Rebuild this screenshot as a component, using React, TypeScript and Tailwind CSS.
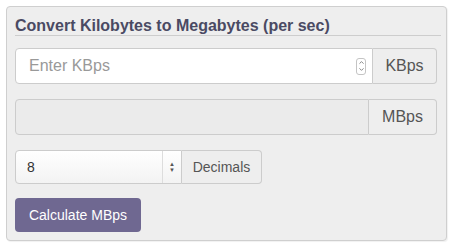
import { ChevronUp, ChevronDown } from "lucide-react"

export default function App() {
  return (
    <div className="h-[249px] w-[453px] bg-white p-[6px] font-['Liberation_Sans',Arial,sans-serif]">
      <div className="h-[235px] w-[441px] rounded-[4px] border border-[#cfcfcf] bg-[#eeeeee] pl-[8px] pt-[9px] shadow-[1px_1px_1px_rgba(0,0,0,0.06)]">
        <h2 className="w-[426px] border-b border-[#cdcdcd] text-[16px] font-bold leading-[19px] text-[#4a4a63]">
          Convert Kilobytes to Megabytes (per sec)
        </h2>

        <div className="mt-[12px] flex h-[36px] w-[422px]">
          <div className="flex flex-1 items-center rounded-l-[4px] border border-[#cccccc] bg-white pl-[13px] pr-[6px]">
            <span className="flex-1 text-[16px] text-[#999999]">Enter KBps</span>
            <div className="flex h-[17px] w-[10px] flex-col items-center justify-center rounded-[3px] border border-[#c4c4c4] text-[#777]">
              <ChevronUp size={7} strokeWidth={3} />
              <ChevronDown size={7} strokeWidth={3} />
            </div>
          </div>
          <div className="flex w-[64px] items-center justify-center rounded-r-[4px] border border-l-0 border-[#cccccc] bg-[#eeeeee] text-[16px] text-[#555555]">
            KBps
          </div>
        </div>

        <div className="mt-[15px] flex h-[36px] w-[422px]">
          <div className="flex-1 rounded-l-[4px] border border-[#cccccc] bg-[#ebebeb]" />
          <div className="flex w-[68px] items-center justify-center rounded-r-[4px] border border-l-0 border-[#cccccc] bg-[#eeeeee] text-[16px] text-[#555555]">
            MBps
          </div>
        </div>

        <div className="mt-[15px] flex h-[34px]">
          <div className="flex w-[167px] rounded-l-[4px] border border-[#cccccc] bg-gradient-to-b from-white to-[#f3f3f3]">
            <span className="flex flex-1 items-center pl-[11px] text-[14px] text-[#333333]">8</span>
            <div className="flex w-[19px] flex-col items-center justify-center border-l border-[#dddddd] text-[6px] leading-[6px] text-[#555]">
              <span>▲</span>
              <span>▼</span>
            </div>
          </div>
          <div className="flex w-[80px] items-center justify-center rounded-r-[4px] border border-l-0 border-[#cccccc] bg-[#eeeeee] text-[14px] text-[#555555]">
            Decimals
          </div>
        </div>

        <button className="mt-[14px] flex h-[34px] w-[126px] items-center justify-center rounded-[4px] bg-[#6f6891] text-[14px] text-white">
          Calculate MBps
        </button>
      </div>
    </div>
  )
}
